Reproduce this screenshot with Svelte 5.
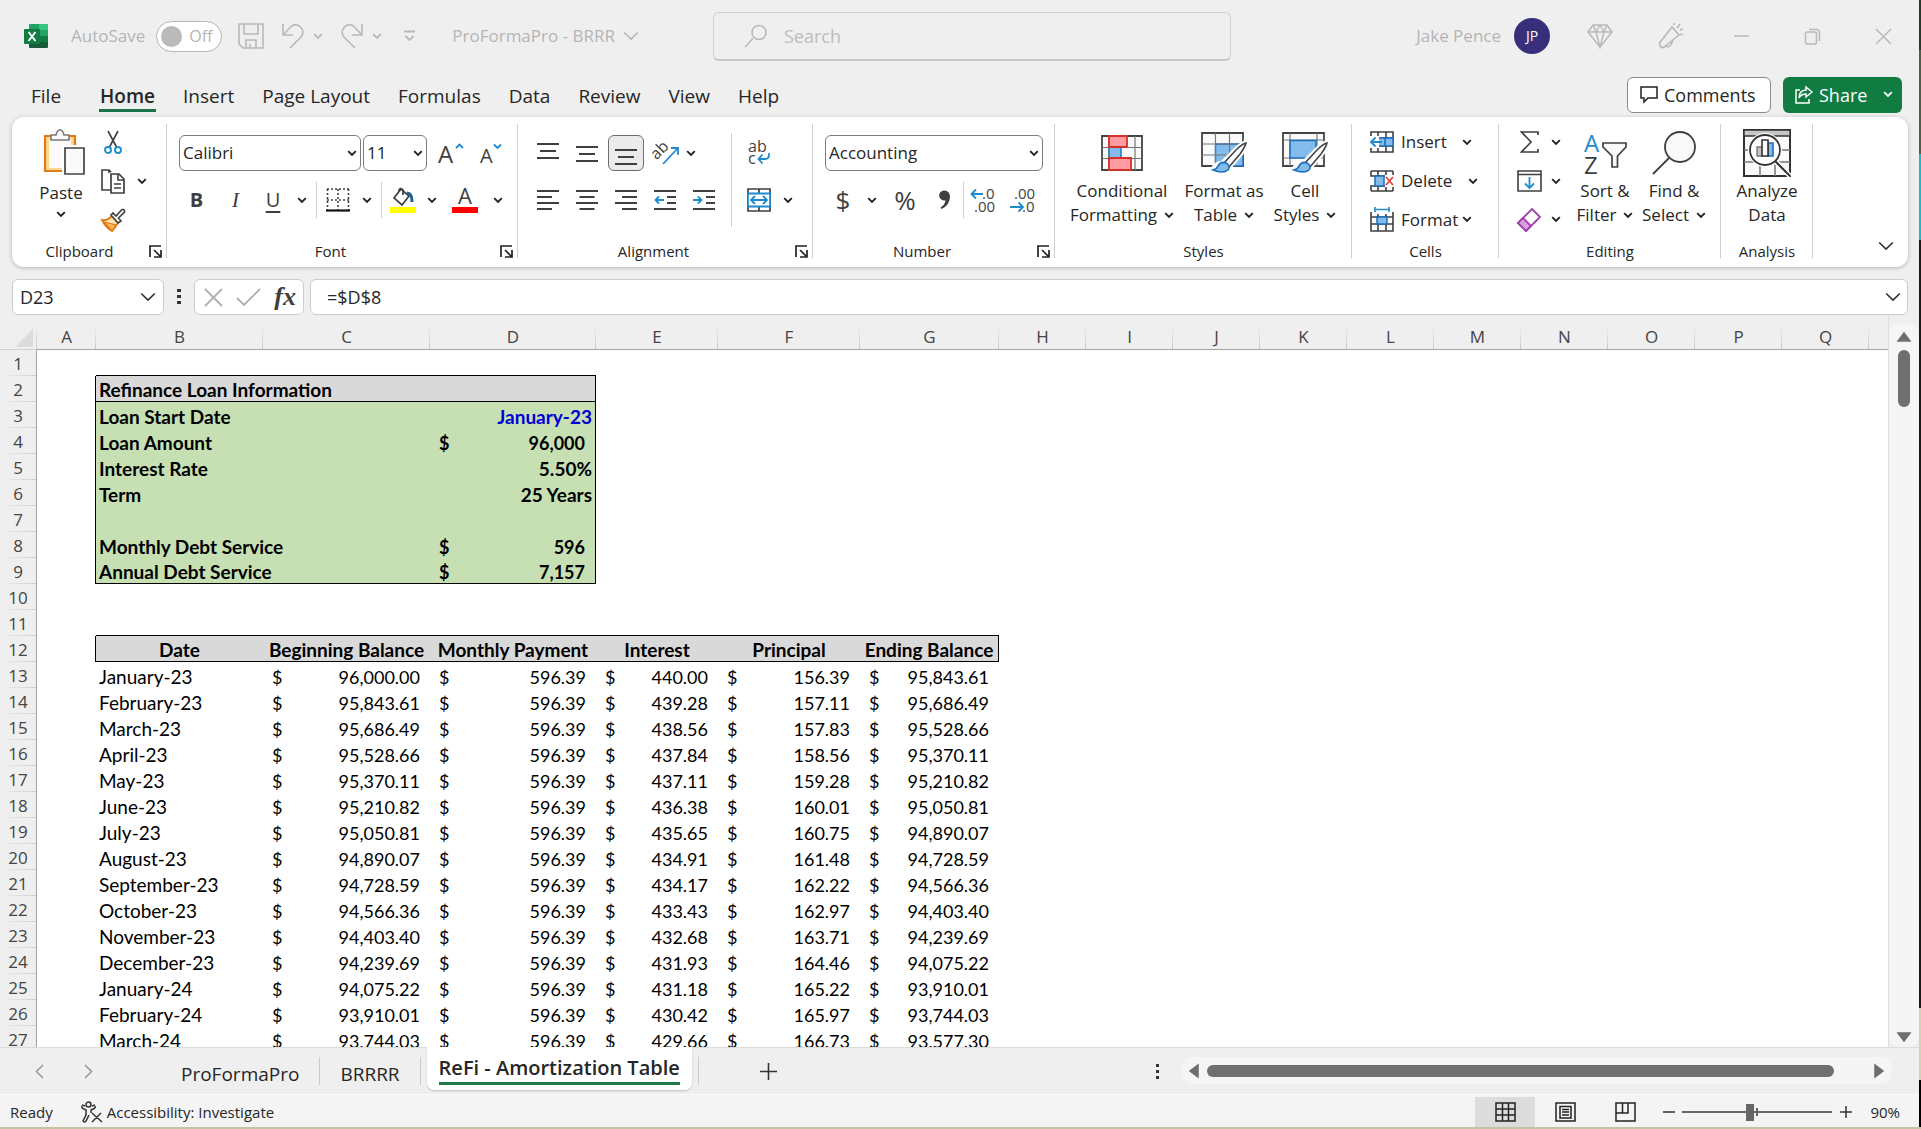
<script>
  const INK = '#3f3f3f';
  const BLUE = '#1e8bcd';
  const PALE = '#83bceb';
  const DIM = '#b9b9b9';

  // Each shape: [path data, stroke, fill, stroke width]
  const icons = {
    chev: { w: 10, h: 7, p: [['M1.2 1.2L5 5L8.8 1.2', '#222', 'none', 1.9]] },
    chevDim: { w: 10, h: 7, p: [['M1.2 1.2L5 5L8.8 1.2', DIM, 'none', 1.9]] },
    chevWhite: { w: 10, h: 7, p: [['M1.2 1.2L5 5L8.8 1.2', '#fff', 'none', 1.9]] },
    chevWide: { w: 16, h: 10, p: [['M1.2 1.5L8 8L14.8 1.5', '#333', 'none', 1.7]] },
    chevWideDim: { w: 16, h: 10, p: [['M1.2 1.5L8 8L14.8 1.5', DIM, 'none', 1.7]] },
    excel: { w: 24, h: 24, p: [
      ['M6 0H15V6H5V1Q5 0 6 0Z', 'none', '#21a366'], ['M15 0H23Q24 0 24 1V6H15Z', 'none', '#33c481'],
      ['M5 6H15V12H5Z', 'none', '#107c41'], ['M15 6H24V12H15Z', 'none', '#21a366'],
      ['M5 12H15V18H5Z', 'none', '#185c37'], ['M15 12H24V18H15Z', 'none', '#107c41'],
      ['M5 18H24V23Q24 24 23 24H6Q5 24 5 23Z', 'none', '#185c37'],
      ['M1 5H15Q16 5 16 6V19Q16 20 15 20H1Q0 20 0 19V6Q0 5 1 5Z', 'none', '#107c41'],
      ['M4.5 8L11.5 17M11.5 8L4.5 17', '#fff', 'none', 2]] },
    save: { w: 26, h: 26, p: [['M1 1H25V25H5L1 21ZM6 1V11H20V1M8 25V17H18V25M12 25V21', DIM, 'none', 1.6]] },
    undo: { w: 24, h: 26, p: [['M2 1V12H12M2.5 11.5L10 3.5Q15 -0.5 19.5 4Q24 9 20 14L9 25', DIM, 'none', 1.6]] },
    redo: { w: 24, h: 26, p: [['M22 1V12H12M21.500 11.500L14 3.500Q9 -0.500 4.500 4Q0 9 4 14L15 25', DIM, 'none', 1.6]] },
    customize: { w: 13, h: 12, p: [['M1 1.500H12M2.500 6L6.500 10L10.500 6', DIM, 'none', 1.8]] },
    search: { w: 24, h: 24, p: [['M1 23L9 14.500M22 8.500A7 7 0 1 1 8 8.500A7 7 0 1 1 22 8.500Z', DIM, 'none', 1.6]] },
    diamond: { w: 26, h: 24, p: [['M6 1H20L25 8L13 23L1 8ZM1 8H25M6 1L9 8L13 23L17 8L20 1M9 8L13 1L17 8', DIM, 'none', 1.5]] },
    megaphone: { w: 26, h: 26, p: [['M14 4L21 12L6 24Q3 26 2 22L1.500 20ZM8 23Q12 26 15 17M16 2V0M19 5L22 1M22 7L25 6M22 11L25 12', DIM, 'none', 1.6]] },
    minimize: { w: 17, h: 17, p: [['M1 8H16', DIM, 'none', 1.5]] },
    restore: { w: 17, h: 17, p: [['M3.500 4H10.500Q12.500 4 12.500 6V14Q12.500 16 10.500 16H3.500Q1.500 16 1.500 14V6Q1.500 4 3.500 4ZM5 1.500H12Q15.500 1.500 15.500 5V13', DIM, 'none', 1.5]] },
    close: { w: 17, h: 17, p: [['M1 1L16 16M16 1L1 16', DIM, 'none', 1.5]] },
    comment: { w: 18, h: 17, p: [['M1 1H17V12H8L4 16V12H1Z', '#222', 'none', 1.5]] },
    share: { w: 18, h: 18, p: [['M5 4H1V17H14V13M11 1L17 6L11 11V8Q6 8 4 12Q4 4.500 11 4Z', '#fff', 'none', 1.5]] },
    paste: { w: 42, h: 46, p: [
      ['M2 7H32V42H2Z', '#e07b1a', '#fbd88c', 2.2], ['M6 10H28V39H6Z', 'none', '#fafafa'],
      ['M8 11V6H13Q14 1 17 1Q20 1 21 6H26V11Z', '#7a7a7a', '#fafafa', 1.6],
      ['M19 16H42V46H19Z', 'none', '#fff'], ['M22 19H41V45H22Z', '#444', '#fafafa', 1.7]] },
    cut: { w: 18, h: 24, p: [['M4 1L12.500 17M14 1L5.500 17', INK], ['M7 20A3 3 0 1 1 1 20A3 3 0 1 1 7 20ZM17 20A3 3 0 1 1 11 20A3 3 0 1 1 17 20Z', BLUE, 'none', 1.9]] },
    copy: { w: 24, h: 25, p: [['M10 21H1V1H8L10 3M8 1V4', INK], ['M10 5H18L23 10V24H10Z', INK, '#fff', 1.7], ['M17 5V11H23M13 15H20M13 19H20', INK]] },
    painter: { w: 25, h: 24, p: [['M1 12Q6 13 11 8L17 15Q14 20 11 23Q5 20 1 12Z', '#e07b1a', '#fce3b0', 1.8], ['M3 14L15 17L11 23Z', '#e07b1a', '#f7b955', 1.2], ['M10 7L12 5L15 8L21 1.500Q24 1 23.500 4L17.500 10L20 13L17 15Z', INK, '#fff', 1.6]] },
    growFont: { w: 24, h: 22, t: [['A', -1, 21, 24, INK]], p: [['M17 6L20.500 2.500L24 6', BLUE, 'none', 1.8]] },
    shrinkFont: { w: 20, h: 22, t: [['A', -1, 21, 20, INK]], p: [['M13 2.500L16.500 6L20 2.500', BLUE, 'none', 1.8]] },
    borders: { w: 24, h: 24, p: [
      ['M1 12H24', INK, 'none', 1.6, '2 2'], ['M1.500 1V22M12 1V22M22.500 1V22', INK, 'none', 1.6, '2 2'],
      ['M1 1H24', INK, 'none', 1.6, '2 2'], ['M0 22.500H24', '#111', 'none', 2.2]] },
    fill: { w: 26, h: 26, p: [['M0 20H26V26H0Z', 'none', '#ffff00'], ['M11 2L4 11L12 18L19 9ZM9 5V3Q10.500 0 13 3V8', INK, 'none', 1.7], ['M17 6Q22 6 22 15', '#17619c', 'none', 3]] },
    fontColor: { w: 26, h: 26, t: [['A', 6, 17, 22, INK]], p: [['M0 20H26V26H0Z', 'none', '#ff0000']] },
    alTop: { w: 22, h: 24, p: [['M0 3H22M3 10H19M0 17H22', INK, 'none', 1.8]] },
    alMid: { w: 22, h: 24, p: [['M0 6H22M3 13H19M0 20H22', INK, 'none', 1.8]] },
    alBot: { w: 22, h: 24, p: [['M0 9H22M3 16H19M0 23H22', INK, 'none', 1.8]] },
    left: { w: 22, h: 22, p: [['M0 2H22M0 8H15M0 14H22M0 20H15', INK, 'none', 1.8]] },
    center: { w: 22, h: 22, p: [['M0 2H22M3.500 8H18.500M0 14H22M3.500 20H18.500', INK, 'none', 1.8]] },
    right: { w: 22, h: 22, p: [['M0 2H22M7 8H22M0 14H22M7 20H22', INK, 'none', 1.8]] },
    outdent: { w: 22, h: 22, p: [['M0 2H22M13 8H22M13 14H22M0 20H22', INK, 'none', 1.8], ['M10 11H1.500M5 7.500L1.500 11L5 14.500', BLUE, 'none', 1.8]] },
    indent: { w: 22, h: 22, p: [['M0 2H22M13 8H22M13 14H22M0 20H22', INK, 'none', 1.8], ['M0 11H8.500M5 7.500L8.500 11L5 14.500', BLUE, 'none', 1.8]] },
    orient: { w: 26, h: 26, t: [['ab', -1, 17, 16, INK, 'rotate(-45 6 12)']], p: [['M11 24L26 8M19 8H26V15', BLUE, 'none', 1.8]] },
    wrap: { w: 22, h: 26, t: [['ab', 0, 12, 16, INK], ['c', 0, 24, 16, INK]], p: [['M21 13V15Q21 19 17 19H11M14.500 14.500L10.500 19L14.500 23.500', BLUE, 'none', 1.8]] },
    merge: { w: 24, h: 24, p: [['M1 1H23V23H1ZM12 1V5M12 19V23', INK, '#fff', 1.7], ['M1 5.500H23V18.500H1Z', BLUE, '#fff', 1.8], ['M4 12H20M8 8L4 12L8 16M16 8L20 12L16 16', BLUE, 'none', 1.8]] },
    comma: { w: 12, h: 20, p: [['M5.500 0.500A5 5 0 1 0 6.500 10.300Q6 15 1.500 17.500L2.500 19Q11 15 11 6.500Q10.500 1 5.500 0.500Z', 'none', INK]] },
    incDec: { w: 25, h: 26, t: [['.0', 12, 12, 15, INK], ['.00', 4, 25, 15, INK]], p: [['M13 7H1.500M6 2.500L1.500 7L6 11.500', BLUE, 'none', 1.8]] },
    decDec: { w: 25, h: 26, t: [['.00', 4, 12, 15, INK], ['.0', 12, 25, 15, INK]], p: [['M0 20H13M8.500 15.500L13 20L8.500 24.500', BLUE, 'none', 1.8]] },
    conditional: { w: 42, h: 36, p: [
      ['M1 1H41V35H1Z', '#444', '#fafafa', 1.8], ['M1 12.500H41M1 23.500H41M8 1V35M34 1V35', '#777', 'none', 1.2],
      ['M8 12H20V24H8Z', '#1b6fc0', PALE, 1.4], ['M8 1H26V12H8ZM8 23H30V35H8Z', '#d6302c', '#ff9ba1', 1.8]] },
    table: { w: 46, h: 42, p: [
      ['M1 1H42V34H1Z', '#444', '#fafafa', 1.8], ['M14.500 12H42V34H14.500Z', '#1b6fc0', PALE, 1.4],
      ['M1 12H42M1 23H42M14.500 1V34M28.500 1V34', '#777', 'none', 1.2],
      ['M45 10Q42 11 36 16L21 31Q13 31 11 39Q26 44 29 35L40 22Q45 15 45 10Z', '#fff', '#fff', 4],
      ['M45 11Q41 12 35 18L23 31L28 35L39 22Q44 15 45 11Z', '#444', '#fff', 1.6],
      ['M12 38Q16 37 17 34Q20 29 25 31Q30 34 27 38Q22 42 12 38Z', '#1b6fc0', PALE, 1.6]] },
    cellStyles: { w: 46, h: 42, p: [
      ['M1 1H42V34H1Z', '#444', '#fafafa', 1.8], ['M1 8H42M1 26H42M8 1V34M35 1V34', '#777', 'none', 1.2],
      ['M8 8.500H34V26H8Z', '#1b6fc0', PALE, 1.5],
      ['M45 10Q42 11 36 16L21 31Q13 31 11 39Q26 44 29 35L40 22Q45 15 45 10Z', '#fff', '#fff', 4],
      ['M45 11Q41 12 35 18L23 31L28 35L39 22Q44 15 45 11Z', '#444', '#fff', 1.6],
      ['M12 38Q16 37 17 34Q20 29 25 31Q30 34 27 38Q22 42 12 38Z', '#1b6fc0', PALE, 1.6]] },
    insertCells: { w: 24, h: 22, p: [['M1 1H23V21H1ZM1 7H23M1 15H23M8 1V21M16 1V21', INK, '#fff', 1.6], ['M8 7H23V15H8Z', '#1b6fc0', PALE, 1.4], ['M0 5H9V17H0Z', 'none', '#fff'], ['M15 7V15', '#1b6fc0'], ['M12 11H1M5.500 6.500L1 11L5.500 15.500', BLUE, 'none', 1.8]] },
    deleteCells: { w: 24, h: 22, p: [['M1 1H23M1 21H23M1 1V6H23M1 21V16H23M8 1V21M16 1V21M23 1V6M23 16V21', INK, 'none', 1.6], ['M5 6H14V16H5Z', '#1b6fc0', PALE, 1.5], ['M15 5H24V17H15Z', 'none', '#fff'], ['M16 7L23 15M23 7L16 15', '#e8413c', 'none', 1.8]] },
    formatCells: { w: 24, h: 25, p: [['M1 5V24H23V5M1 10H23M1 17H23M8 7V24M16 7V24', INK, 'none', 1.6], ['M7 10H17V17H7Z', '#1b6fc0', PALE, 1.5], ['M5 2.500H19M5 0V5M19 0V5', BLUE, 'none', 1.6]] },
    sum: { w: 19, h: 22, p: [['M18 4V1H1.500L11 11L1.500 21H18V18', INK, 'none', 1.7]] },
    fillDown: { w: 25, h: 22, p: [['M1 1H24V21H1ZM1 4.500H24', INK, '#fff', 1.6], ['M12.500 7V17.500M8 13.500L12.500 18L17 13.500', BLUE, 'none', 1.8]] },
    clear: { w: 24, h: 24, p: [['M15 1L23 9L9 23L1 15Z', '#a13fae', '#fff', 1.8], ['M6 10L14 18L9 23L1 15Z', '#a13fae', '#dd9fe3', 1.8]] },
    sort: { w: 42, h: 44, t: [['A', 0, 21, 24, BLUE], ['Z', 0, 43, 24, INK]], p: [['M19 12H42V16L33.500 25V36H28V25L19 16Z', INK, '#fafafa', 1.7]] },
    find: { w: 44, h: 44, p: [['M1 43L17 27', INK, 'none', 1.8], ['M43 16A15 15 0 1 1 13 16A15 15 0 1 1 43 16Z', INK, '#fafafa', 1.8]] },
    analyze: { w: 48, h: 48, p: [
      ['M1 1H47V47H1Z', '#333', '#fafafa', 2], ['M1 1H47V7H1Z', '#333', '#c8c6c4', 1.4], ['M1 21H47M1 33H47M17 33V47M32 33V47', '#777', 'none', 1.5],
      ['M22 4A17 17 0 1 1 22 38A17 17 0 1 1 22 4Z', 'none', '#fff'], ['M32 32L47 47', '#fff', 'none', 5], ['M32 32L47 47', '#333', 'none', 2],
      ['M22 6A15 15 0 1 1 22 36A15 15 0 1 1 22 6Z', '#333', '#fff', 1.8],
      ['M14 18H20V27H14Z', '#777', '#c8c6c4', 1.4], ['M25 14H30V27H25Z', '#1b6fc0', PALE, 1.6], ['M19 11H25V27H19Z', '#333', '#fff', 1.6]] },
    launch: { w: 13, h: 13, p: [['M1 12V1H12M5 5L11 11M12 5V12H5', '#222', 'none', 1.7]] },
    dots: { w: 4, h: 18, p: [['M0 1H4V4H0ZM0 7H4V10H0ZM0 13H4V16H0Z', 'none', '#333']] },
    dotsSmall: { w: 3, h: 17, p: [['M0 1H3V4H0ZM0 7H3V10H0ZM0 13H3V16H0Z', 'none', '#333']] },
    cancel: { w: 19, h: 19, p: [['M1 1L18 18M18 1L1 18', '#b0b0b0', 'none', 1.8]] },
    accept: { w: 25, h: 18, p: [['M1 10L8 17L24 1', '#b0b0b0', 'none', 1.8]] },
    prev: { w: 9, h: 15, p: [['M8 1L1.500 7.500L8 14', '#999', 'none', 1.5]] },
    next: { w: 9, h: 15, p: [['M1 1L7.500 7.500L1 14', '#999', 'none', 1.5]] },
    plus: { w: 17, h: 17, p: [['M8.500 0V17M0 8.500H17', '#333', 'none', 1.6]] },
    access: { w: 22, h: 22, p: [['M10 3.500A2.500 2.500 0 1 1 5 3.500A2.500 2.500 0 1 1 10 3.500ZM1 5Q0 7 3 8L5 9V14L2 20Q3 22 5 20L8 14M14 5Q15 7 12 8L10 9V12M4 5L1 4M11 5L14 4M11 12L21 21M20 12L11 21', '#333', 'none', 1.5]] },
    viewNormal: { w: 21, h: 20, p: [['M1 1H20V19H1ZM1 7H20M1 13H20M7.500 1V19M13.500 1V19', '#222', 'none', 1.5]] },
    viewPage: { w: 21, h: 20, p: [['M1 1H20V19H1ZM5 4.500H16V16H5ZM7 7.500H14M7 10H14M7 13H14', '#222', 'none', 1.5]] },
    viewBreak: { w: 21, h: 20, p: [['M1 1H20V19H1ZM1 11H13V1M7.500 1V11', '#222', 'none', 1.5]] },
    zoomOut: { w: 12, h: 12, p: [['M0 6H12', '#333', 'none', 1.5]] },
    zoomIn: { w: 12, h: 12, p: [['M0 6H12M6 0V12', '#333', 'none', 1.5]] },
    up: { w: 14, h: 10, p: [['M7 1L13 9H1Z', '#6d6d6d', '#6d6d6d', 1.5]] },
    down: { w: 14, h: 10, p: [['M1 1H13L7 9Z', '#6d6d6d', '#6d6d6d', 1.5]] },
    goLeft: { w: 10, h: 14, p: [['M9 1V13L1 7Z', '#6d6d6d', '#6d6d6d', 1.5]] },
    goRight: { w: 10, h: 14, p: [['M1 1V13L9 7Z', '#6d6d6d', '#6d6d6d', 1.5]] },
    corner: { w: 18, h: 18, p: [['M18 0V18H0Z', 'none', '#dcdcdc']] }
  };

  const menu = ['File', 'Home', 'Insert', 'Page Layout', 'Formulas', 'Data', 'Review', 'View', 'Help'];
  const letters = 'ABCDEFGHIJKLMNOPQ'.split('');

  const payments = [
    ['January-23', '96,000.00', '440.00', '156.39', '95,843.61'],
    ['February-23', '95,843.61', '439.28', '157.11', '95,686.49'],
    ['March-23', '95,686.49', '438.56', '157.83', '95,528.66'],
    ['April-23', '95,528.66', '437.84', '158.56', '95,370.11'],
    ['May-23', '95,370.11', '437.11', '159.28', '95,210.82'],
    ['June-23', '95,210.82', '436.38', '160.01', '95,050.81'],
    ['July-23', '95,050.81', '435.65', '160.75', '94,890.07'],
    ['August-23', '94,890.07', '434.91', '161.48', '94,728.59'],
    ['September-23', '94,728.59', '434.17', '162.22', '94,566.36'],
    ['October-23', '94,566.36', '433.43', '162.97', '94,403.40'],
    ['November-23', '94,403.40', '432.68', '163.71', '94,239.69'],
    ['December-23', '94,239.69', '431.93', '164.46', '94,075.22'],
    ['January-24', '94,075.22', '431.18', '165.22', '93,910.01'],
    ['February-24', '93,910.01', '430.42', '165.97', '93,744.03'],
    ['March-24', '93,744.03', '429.66', '166.73', '93,577.30']
  ];

  // Sheet content by row number; each cell: [text, kind]
  const content = {
    2: { B: ['Refinance Loan Information', 'text'] },
    3: { B: ['Loan Start Date', 'text'], D: ['January-23', 'end entry'] },
    4: { B: ['Loan Amount', 'text'], D: ['96,000', 'money'] },
    5: { B: ['Interest Rate', 'text'], D: ['5.50%', 'end'] },
    6: { B: ['Term', 'text'], D: ['25 Years', 'end'] },
    8: { B: ['Monthly Debt Service', 'text'], D: ['596', 'money'] },
    9: { B: ['Annual Debt Service', 'text'], D: ['7,157', 'money'] },
    12: {
      B: ['Date', 'mid'], C: ['Beginning Balance', 'mid'], D: ['Monthly Payment', 'mid'],
      E: ['Interest', 'mid'], F: ['Principal', 'mid'], G: ['Ending Balance', 'mid']
    }
  };
  payments.forEach(([date, begin, interest, principal, end], i) => {
    content[13 + i] = {
      B: [date, 'text'], C: [begin, 'money'], D: ['596.39', 'money'],
      E: [interest, 'money'], F: [principal, 'money'], G: [end, 'money']
    };
  });
  const rows = Array.from({ length: 27 }, (_, i) => i + 1);

  function look(row, col) {
    const out = [];
    const loan = 'BCD'.includes(col);
    const schedule = 'BCDEFG'.includes(col);
    if (row === 2 && loan) out.push('grey bold');
    if (row > 2 && row < 10 && loan) out.push('green bold');
    if (row === 12 && schedule) out.push('grey bold');
    if ((loan && [1, 2, 9].includes(row)) || (schedule && [11, 12].includes(row))) out.push('line-b');
    if ((row > 1 && row < 10 && 'AD'.includes(col)) || (row === 12 && 'AG'.includes(col))) out.push('line-r');
    return out.join(' ');
  }

  let formula = $state('=$D$8');
  let cellName = $state('D23');
  let zoom = $state(45);
</script>

{#snippet icon(name)}
  {@const g = icons[name]}
  <svg width={g.w} height={g.h} viewBox="0 0 {g.w} {g.h}" fill="none" aria-hidden="true">
    {#each g.p as [d, stroke, fill, width, dash]}
      <path {d} stroke={stroke} fill={fill ?? 'none'} stroke-width={width ?? 1.6} stroke-dasharray={dash} />
    {/each}
    {#each g.t ?? [] as [s, x, y, size, color, turn]}
      <text {x} {y} font-size={size} fill={color} transform={turn}>{s}</text>
    {/each}
  </svg>
{/snippet}

{#snippet tool(name, label, cls)}
  <button class="tool {cls ?? ''}" aria-label={label}>{@render icon(name)}</button>
{/snippet}

{#snippet drop(label)}
  <button class="drop" aria-label={label}>{@render icon('chev')}</button>
{/snippet}

{#snippet caption(text, launcher)}
  <div class="caption">
    <span>{text}</span>
    {#if launcher}<button class="launcher" aria-label="{text} settings">{@render icon('launch')}</button>{/if}
  </div>
{/snippet}

{#snippet big(name, first, second, hasMenu, cls)}
  <button class="big {cls}">
    <span class="pic">{@render icon(name)}</span>
    <span>{first}</span>
    <span class="with-chev">{second}{#if hasMenu}{@render icon('chev')}{/if}</span>
  </button>
{/snippet}

<div class="desktop">
  <div class="window">
    <header class="title">
      <div class="title-left">
        {@render icon('excel')}
        <label class="autosave">AutoSave
          <span class="switch"><input type="checkbox" aria-label="AutoSave" /><span>Off</span></span>
        </label>
        <button class="plain" aria-label="Save">{@render icon('save')}</button>
        <button class="plain pair" aria-label="Undo">{@render icon('undo')}{@render icon('chevDim')}</button>
        <button class="plain pair" aria-label="Redo">{@render icon('redo')}{@render icon('chevDim')}</button>
        <button class="plain customize" aria-label="Customize toolbar">{@render icon('customize')}</button>
        <button class="plain doc">ProFormaPro - BRRR {@render icon('chevWideDim')}</button>
      </div>
      <label class="search">{@render icon('search')}<input type="text" placeholder="Search" aria-label="Search" /></label>
      <div class="title-right">
        <span class="user">Jake Pence</span>
        <button class="avatar">JP</button>
        <button class="plain wide" aria-label="Premium">{@render icon('diamond')}</button>
        <button class="plain wide" aria-label="What's new">{@render icon('megaphone')}</button>
        <button class="plain wide" aria-label="Minimize">{@render icon('minimize')}</button>
        <button class="plain wide" aria-label="Restore">{@render icon('restore')}</button>
        <button class="plain wide" aria-label="Close">{@render icon('close')}</button>
      </div>
    </header>

    <nav class="menu">
      {#each menu as item}
        <button class="menu-item" class:active={item === 'Home'}>{item}</button>
      {/each}
      <button class="comments">{@render icon('comment')}Comments</button>
      <button class="share">{@render icon('share')}Share<span class="share-chev">{@render icon('chevWhite')}</span></button>
    </nav>

    <section class="ribbon" aria-label="Home ribbon">
      <div class="group clipboard">
        <div class="body side">
          <button class="paste">{@render icon('paste')}<span>Paste</span>{@render icon('chev')}</button>
          <div class="stack">
            <div class="line">{@render tool('cut', 'Cut')}</div>
            <div class="line">{@render tool('copy', 'Copy')}{@render drop('Copy options')}</div>
            <div class="line">{@render tool('painter', 'Format Painter')}</div>
          </div>
        </div>
        {@render caption('Clipboard', true)}
      </div>

      <div class="group font">
        <div class="body two">
          <div class="row combos">
            <label class="combo family"><select aria-label="Font"><option>Calibri</option></select>{@render icon('chev')}</label>
            <label class="combo size"><select aria-label="Font size"><option>11</option></select>{@render icon('chev')}</label>
            {@render tool('growFont', 'Increase font size', 'w44')}
            {@render tool('shrinkFont', 'Decrease font size')}
          </div>
          <div class="row">
            <button class="tool w39 glyph b" aria-label="Bold">B</button>
            <button class="tool w39 glyph i" aria-label="Italic">I</button>
            <button class="tool glyph u" aria-label="Underline">U</button>
            {@render drop('Underline options')}
            <span class="bar"></span>
            {@render tool('borders', 'Borders')}
            {@render drop('Border options')}
            <span class="bar"></span>
            {@render tool('fill', 'Fill color')}
            {@render drop('Fill colors')}
            {@render tool('fontColor', 'Font color', 'w44')}
            {@render drop('Font colors')}
          </div>
        </div>
        {@render caption('Font', true)}
      </div>

      <div class="group alignment">
        <div class="body side">
          <div class="two grow">
            <div class="row gap">
              {@render tool('alTop', 'Top align')}
              {@render tool('alMid', 'Middle align')}
              {@render tool('alBot', 'Bottom align', 'on')}
              {@render tool('orient', 'Orientation')}
              {@render drop('Orientation options')}
            </div>
            <div class="row gap">
              {@render tool('left', 'Align left')}
              {@render tool('center', 'Center')}
              {@render tool('right', 'Align right')}
              {@render tool('outdent', 'Decrease indent')}
              {@render tool('indent', 'Increase indent')}
            </div>
          </div>
          <span class="bar tall"></span>
          <div class="two wraps">
            <div class="row">{@render tool('wrap', 'Wrap text')}</div>
            <div class="row">{@render tool('merge', 'Merge and center')}{@render drop('Merge options')}</div>
          </div>
        </div>
        {@render caption('Alignment', true)}
      </div>

      <div class="group number">
        <div class="body two">
          <label class="combo"><select aria-label="Number format"><option>Accounting</option></select>{@render icon('chev')}</label>
          <div class="row">
            <button class="tool glyph money-sign" aria-label="Accounting format">$</button>
            {@render drop('Currencies')}
            <button class="tool w44 glyph percent" aria-label="Percent style">%</button>
            {@render tool('comma', 'Comma style')}
            <span class="bar"></span>
            {@render tool('incDec', 'Increase decimal')}
            {@render tool('decDec', 'Decrease decimal', 'w44')}
          </div>
        </div>
        {@render caption('Number', true)}
      </div>

      <div class="group styles">
        <div class="body side">
          {@render big('conditional', 'Conditional', 'Formatting', true, 'xl')}
          {@render big('table', 'Format as', 'Table', true, 'l')}
          {@render big('cellStyles', 'Cell', 'Styles', true, 'm')}
        </div>
        {@render caption('Styles')}
      </div>

      <div class="group cells">
        <div class="body stack">
          <div class="line"><button class="wide-tool">{@render icon('insertCells')}Insert</button>{@render drop('Insert options')}</div>
          <div class="line"><button class="wide-tool longer">{@render icon('deleteCells')}Delete</button>{@render drop('Delete options')}</div>
          <div class="line"><button class="wide-tool">{@render icon('formatCells')}Format</button>{@render drop('Format options')}</div>
        </div>
        {@render caption('Cells')}
      </div>

      <div class="group editing">
        <div class="body side">
          <div class="stack">
            <div class="line">{@render tool('sum', 'AutoSum')}{@render drop('AutoSum options')}</div>
            <div class="line">{@render tool('fillDown', 'Fill')}{@render drop('Fill options')}</div>
            <div class="line">{@render tool('clear', 'Clear')}{@render drop('Clear options')}</div>
          </div>
          {@render big('sort', 'Sort &', 'Filter', true, 'm')}
          {@render big('find', 'Find &', 'Select', true, 'm')}
        </div>
        {@render caption('Editing')}
      </div>

      <div class="group analysis">
        <div class="body side">{@render big('analyze', 'Analyze', 'Data', false, 'fill')}</div>
        {@render caption('Analysis')}
      </div>

      <button class="plain collapse" aria-label="Collapse ribbon">{@render icon('chevWide')}</button>
    </section>

    <section class="formula-bar" aria-label="Formula bar">
      <div class="field name-box"><input type="text" aria-label="Name box" bind:value={cellName} /><button class="plain" aria-label="Names">{@render icon('chevWide')}</button></div>
      <span class="grip">{@render icon('dots')}</span>
      <div class="field actions">
        <button class="plain" aria-label="Cancel">{@render icon('cancel')}</button>
        <button class="plain" aria-label="Enter">{@render icon('accept')}</button>
        <button class="plain fx" aria-label="Insert function">fx</button>
      </div>
      <div class="field formula"><input type="text" aria-label="Formula" bind:value={formula} /><button class="plain" aria-label="Expand formula bar">{@render icon('chevWide')}</button></div>
    </section>

    <main class="sheet">
      <div class="viewport">
        <table>
          <colgroup>
            <col class="c-head" />
            {#each letters as l}<col class="c-{l}" />{/each}
            <col />
          </colgroup>
          <thead>
            <tr>
              <td class="all">{@render icon('corner')}</td>
              {#each letters as l}<th scope="col">{l}</th>{/each}
              <td class="rest"></td>
            </tr>
          </thead>
          <tbody>
            {#each rows as r}
              <tr>
                <th scope="row">{r}</th>
                {#each letters as l}
                  {@const cell = content[r]?.[l]}
                  <td class="{look(r, l)} {cell?.[1] ?? ''}">
                    {#if cell?.[1] === 'money'}
                      <div class="acct"><span>$</span><span>{cell[0]}</span></div>
                    {:else if cell}{cell[0]}{/if}
                  </td>
                {/each}
                <td></td>
              </tr>
            {/each}
          </tbody>
        </table>
      </div>
      <div class="vscroll">
        <button class="plain" aria-label="Scroll up">{@render icon('up')}</button>
        <span class="vthumb"></span>
        <button class="plain last" aria-label="Scroll down">{@render icon('down')}</button>
      </div>
    </main>

    <nav class="tabs" aria-label="Sheets">
      <button class="plain step" aria-label="Previous sheet">{@render icon('prev')}</button>
      <button class="plain step" aria-label="Next sheet">{@render icon('next')}</button>
      <button class="tab first">ProFormaPro</button>
      <span class="tab-bar"></span>
      <button class="tab">BRRRR</button>
      <span class="tab-bar"></span>
      <button class="tab current"><span>ReFi - Amortization Table</span></button>
      <span class="tab-bar"></span>
      <button class="plain add" aria-label="New sheet">{@render icon('plus')}</button>
      <span class="grip end">{@render icon('dotsSmall')}</span>
      <div class="hscroll">
        <button class="plain" aria-label="Scroll left">{@render icon('goLeft')}</button>
        <span class="hthumb"></span>
        <button class="plain" aria-label="Scroll right">{@render icon('goRight')}</button>
      </div>
    </nav>

    <footer class="status">
      <span>Ready</span>
      <button class="plain check">{@render icon('access')}Accessibility: Investigate</button>
      <button class="view chosen" aria-label="Normal view">{@render icon('viewNormal')}</button>
      <button class="view" aria-label="Page layout view">{@render icon('viewPage')}</button>
      <button class="view" aria-label="Page break view">{@render icon('viewBreak')}</button>
      <button class="plain zoom-btn" aria-label="Zoom out">{@render icon('zoomOut')}</button>
      <input class="slider" type="range" min="0" max="100" aria-label="Zoom" bind:value={zoom} />
      <button class="plain zoom-btn" aria-label="Zoom in">{@render icon('zoomIn')}</button>
      <button class="plain percentage">90%</button>
    </footer>
  </div>
</div>

<style>
  :global(body) { margin: 0; }
  * { box-sizing: border-box; }
  .desktop {
    height: 100vh;
    padding: 0 2px 2px 0;
    background:
      linear-gradient(#c3c3a6, #c3c3a6) no-repeat left bottom / 100% 2px,
      linear-gradient(#24382c 50px, #4c6048 50px, #4c6048 154px, #12bcc8 154px, #12bcc8 240px, #191919 240px, #191919 1008px, #d2d2b4 1008px, #d2d2b4 1080px, #000 1080px);
    overflow: hidden;
  }
  .window {
    display: flex;
    flex-direction: column;
    height: 100%;
    background: #efefef;
    font-family: 'Open Sans', 'Noto Sans', sans-serif;
    font-size: 17px;
    line-height: 24px;
    color: #262626;
  }
  button, input, select { font: inherit; color: inherit; margin: 0; }
  button { padding: 0; border: 0; background: none; white-space: nowrap; }
  input { border: 0; background: none; outline: 0; min-width: 0; }
  svg { display: block; flex: none; overflow: visible; }
  .plain { display: flex; align-items: center; justify-content: center; }

  .title { display: grid; grid-template-columns: 713px minmax(200px, 518px) 1fr; align-items: center; height: 72px; color: #b5b5b5; }
  .title-left { display: flex; align-items: center; padding-left: 24px; }
  .autosave { display: flex; align-items: center; gap: 11px; margin: 0 16px 0 23px; }
  .switch { display: flex; align-items: center; gap: 7px; width: 66px; height: 31px; padding-left: 4px; border: 1px solid #b5b5b5; border-radius: 16px; background: #fff; font-size: 16px; }
  .switch input { appearance: none; width: 21px; height: 21px; border-radius: 50%; background: #bababa; }
  .pair { gap: 8px; margin-left: 17px; }
  .customize { margin-left: 21px; }
  .doc { gap: 8px; margin-left: 36px; }
  .search { display: flex; align-items: center; gap: 16px; height: 49px; padding-left: 30px; border: 1px solid #cfcfcf; border-bottom: 2px solid #c6c6c6; border-radius: 6px; font-size: 18px; }
  .search input { flex: 1; padding: 0; }
  .search input::placeholder { color: #bdbdbd; opacity: 1; }
  .title-right { display: flex; align-items: center; justify-content: flex-end; }
  .user { margin-right: 13px; white-space: nowrap; }
  .avatar { width: 36px; height: 36px; margin-right: 14px; border-radius: 50%; background: #372f79; color: #fff; font-size: 14px; line-height: 20px; }
  .wide { width: 71px; }

  .menu { display: flex; align-items: center; height: 45px; padding: 0 17px; font-size: 19px; }
  .menu-item { height: 34px; padding: 2px 14px 0; }
  .menu-item:first-child { margin-right: 11px; }
  .menu-item.active { font-weight: 600; background: linear-gradient(#17744a, #17744a) no-repeat center bottom / calc(100% - 26px) 3px; }
  .comments, .share { display: flex; align-items: center; height: 36px; border-radius: 6px; font-size: 18px; }
  .comments { gap: 6px; width: 144px; padding-left: 12px; margin-left: auto; margin-right: 12px; border: 1px solid #8a8a8a; background: #fff; }
  .share { gap: 6px; width: 119px; padding-left: 12px; background: #107c41; color: #fff; }
  .share-chev { margin-left: 10px; }

  .ribbon { display: flex; flex: none; height: 150px; margin: 0 11px 12px 12px; border-radius: 12px; background: #fff; box-shadow: 0 1px 4px rgba(0, 0, 0, 0.25); }
  .group { display: flex; flex-direction: column; flex: none; background: linear-gradient(#cfcfcf, #cfcfcf) no-repeat right 7px / 1px 134px; }
  .clipboard { width: 155px; }
  .font { width: 351px; }
  .alignment { width: 295px; }
  .number { width: 242px; }
  .styles { width: 297px; }
  .cells { width: 147px; }
  .editing { width: 222px; }
  .analysis { width: 92px; }
  .body { flex: 1; min-height: 0; }
  .side { display: flex; }
  .caption { display: flex; align-items: center; height: 28px; padding-bottom: 4px; font-size: 15px; line-height: 20px; }
  .caption span { flex: 1; text-align: center; }
  .launcher { display: grid; place-items: center; width: 24px; height: 24px; }
  .clipboard .body { padding-left: 26px; }
  .clipboard .caption { padding-left: 4px; }
  .paste { display: flex; flex-direction: column; align-items: center; width: 52px; padding-top: 12px; }
  .paste span { margin: 6px 6px 6px 0; }
  .paste svg:last-child { margin-right: 6px; }
  .stack { display: flex; flex-direction: column; padding-top: 6px; }
  .clipboard .stack { padding-left: 5px; }
  .line { display: flex; align-items: center; height: 39px; }
  .tool { display: grid; place-items: center; width: 36px; height: 36px; flex: none; border-radius: 6px; }
  .w39 { width: 39px; }
  .w44 { width: 44px; }
  .tool.on { border: 1px solid #6e6e6e; background: #ebebeb; }
  .drop { display: grid; place-items: center; width: 22px; height: 36px; flex: none; }
  .two { display: flex; flex-direction: column; gap: 11px; padding-top: 18px; }
  .row { display: flex; align-items: center; height: 36px; }
  .row.gap { gap: 3px; }
  .row.gap .drop { margin-left: -6px; }
  .bar { width: 1px; height: 36px; margin: 0 3px; background: #cfcfcf; flex: none; }
  .bar.tall { height: 94px; margin: 16px 9px 0 0; }
  .font .body { padding-left: 10px; }
  .combos { padding-left: 2px; gap: 2px; }
  .combos .tool { margin-right: -2px; }
  .combo { display: grid; align-items: center; height: 36px; border: 1px solid #7d7d7d; border-radius: 6px; background: #fff; }
  .combo select { grid-area: 1 / 1; appearance: none; width: 100%; height: 34px; padding: 0 3px; border: 0; background: none; outline: 0; }
  .combo :global(svg) { grid-area: 1 / 1; justify-self: end; margin-right: 3px; pointer-events: none; }
  .family { width: 182px; }
  .size { width: 64px; }
  .glyph { font-size: 20px; line-height: 28px; color: #3f3f3f; }
  .b { font-weight: 700; }
  .i { font-family: 'Liberation Serif', serif; font-style: italic; font-size: 22px; }
  .u { text-decoration: underline; text-underline-offset: 4px; text-decoration-thickness: 2px; }
  .money-sign, .percent { font-size: 26px; }
  .alignment .body { padding-left: 12px; }
  .grow { width: 201px; }
  .number .body { padding: 18px 12px 0; }
  .number .row .bar { margin: 0; }
  .styles .body { padding-left: 12px; }
  .big { display: flex; flex-direction: column; align-items: center; padding-top: 9px; }
  .pic { display: grid; place-items: center; height: 53px; }
  .with-chev { display: flex; align-items: center; gap: 7px; }
  .xl { width: 110px; }
  .l { width: 94px; }
  .m { width: 68px; }
  .fill { width: 100%; }
  .cells .body { padding-left: 18px; }
  .wide-tool { display: flex; align-items: center; gap: 7px; width: 86px; height: 36px; }
  .longer { width: 92px; }
  .editing .body { padding-left: 12px; }
  .editing .stack { width: 60px; }
  .editing .drop { margin-left: -2px; }
  .editing .m + .m { margin-left: 1px; }
  .collapse { align-self: flex-end; margin: 0 14px 16px auto; }

  .formula-bar { display: flex; flex: none; height: 36px; padding: 0 11px 0 12px; font-size: 18px; }
  .field { display: flex; align-items: center; border: 1px solid #cdcdcd; border-radius: 6px; background: #fff; }
  .name-box { width: 152px; padding: 0 7px; }
  .name-box input { flex: 1; padding: 0; }
  .grip { display: grid; place-items: center; width: 30px; }
  .actions { width: 110px; padding: 0 7px 0 9px; justify-content: space-between; }
  .fx { font-family: 'Liberation Serif', serif; font-style: italic; font-weight: 700; font-size: 26px; line-height: 28px; color: #3f3f3f; }
  .formula { flex: 1; margin-left: 6px; padding: 0 6px 0 16px; }
  .formula input { flex: 1; padding: 0; }

  .sheet { display: flex; flex: 1; min-height: 0; }
  .viewport { flex: 1; min-width: 0; overflow: hidden; background: #fff; border-right: 1px solid #dedede; }
  table { width: 100%; table-layout: fixed; border-collapse: separate; border-spacing: 0; font-family: Lato, 'Open Sans', sans-serif; font-size: 18px; color: #000; }
  .c-head { width: 37px; }
  .c-A { width: 59px; }
  .c-B, .c-C { width: 167px; }
  .c-D { width: 166px; }
  .c-E { width: 122px; }
  .c-F { width: 142px; }
  .c-G { width: 139px; }
  .c-H, .c-I, .c-J, .c-K, .c-L, .c-M, .c-N, .c-O, .c-P, .c-Q { width: 87px; }
  th { padding: 0; font-family: 'Open Sans', sans-serif; font-size: 17px; font-weight: 400; color: #444; }
  thead th, thead td { height: 35px; padding: 10px 0 0; border-bottom: 1px solid #a3a3a3; background: linear-gradient(#efefef, #c9c9c9) no-repeat right bottom / 1px 24px #efefef; }
  thead td.rest { background: #efefef; }
  thead td.all { padding: 0 3px 2px 15px; vertical-align: bottom; border-bottom-color: #cfcfcf; }
  tbody th { height: 26px; padding-top: 2px; border-right: 1px solid #a3a3a3; background: linear-gradient(90deg, #efefef, #cfcfcf) no-repeat left bottom / 100% 1px #efefef; }
  tbody td { height: 26px; padding: 3px 3px 0; white-space: nowrap; line-height: 22px; border: 0 solid #000; }
  td.text, td.mid, td.end { font-size: 19px; }
  td.grey { background: #d9d9d9; }
  td.green { background: #c6e0b4; }
  td.bold { font-weight: 700; }
  td.line-b { border-bottom-width: 1px; }
  td.line-r { border-right-width: 1px; }
  td.end { text-align: right; }
  td.mid { text-align: center; padding: 3px 0 0; }
  td.entry { color: #0000d6; }
  .acct { display: flex; justify-content: space-between; padding: 0 7px 0 6px; }
  .vscroll { display: flex; flex-direction: column; align-items: center; gap: 8px; width: 30px; margin-top: 8px; padding: 9px 0 5px; border-radius: 12px; background: #f5f5f5; }
  .vthumb { width: 12px; height: 57px; border-radius: 6px; background: #6f6f6f; }
  .last { margin-top: auto; }

  .tabs { display: flex; flex: none; height: 48px; border-top: 1px solid #dcdcdc; border-bottom: 1px solid #fbfbfb; font-size: 19px; }
  .step { width: 49px; height: 46px; }
  .step:first-child { margin-left: 15px; }
  .tab { padding: 5px 20px 0; }
  .tab.first { margin-left: 48px; }
  .tab-bar { width: 1px; height: 28px; margin-top: 9px; background: #cbcbcb; }
  .tab.current { height: 43px; margin: -1px 6px 0; padding: 3px 12px 0; border-radius: 0 0 7px 7px; background: #fff; font-size: 20px; font-weight: 600; box-shadow: 0 1px 2px rgba(0, 0, 0, 0.2); }
  .tab.current span { display: block; padding-bottom: 2px; border-bottom: 3px solid #1d7a4b; }
  .add { width: 140px; height: 46px; }
  .grip.end { margin-left: auto; width: 48px; height: 46px; }
  .hscroll { display: flex; align-items: center; gap: 8px; width: 711px; height: 27px; margin: 9px 27px 0 0; padding: 0 8px; border-radius: 12px; background: #f5f5f5; }
  .hthumb { width: 627px; height: 12px; margin-right: auto; border-radius: 6px; background: #6f6f6f; }

  .status { display: flex; align-items: center; flex: none; height: 32px; padding: 2px 0 0 10px; background: #f4f4f4; font-size: 15px; line-height: 20px; }
  .check { gap: 4px; margin: 0 auto 0 28px; }
  .view { display: grid; place-items: center; width: 60px; height: 30px; }
  .chosen { background: #dcdcdc; }
  .zoom-btn { width: 27px; height: 30px; }
  .slider { appearance: none; width: 150px; height: 18px; background: linear-gradient(#666, #666) no-repeat center / 100% 2px, linear-gradient(#666, #666) no-repeat center / 2px 8px; }
  .slider::-webkit-slider-thumb { appearance: none; width: 8px; height: 17px; background: #666; }
  .percentage { margin: 0 19px 0 11px; }
</style>
